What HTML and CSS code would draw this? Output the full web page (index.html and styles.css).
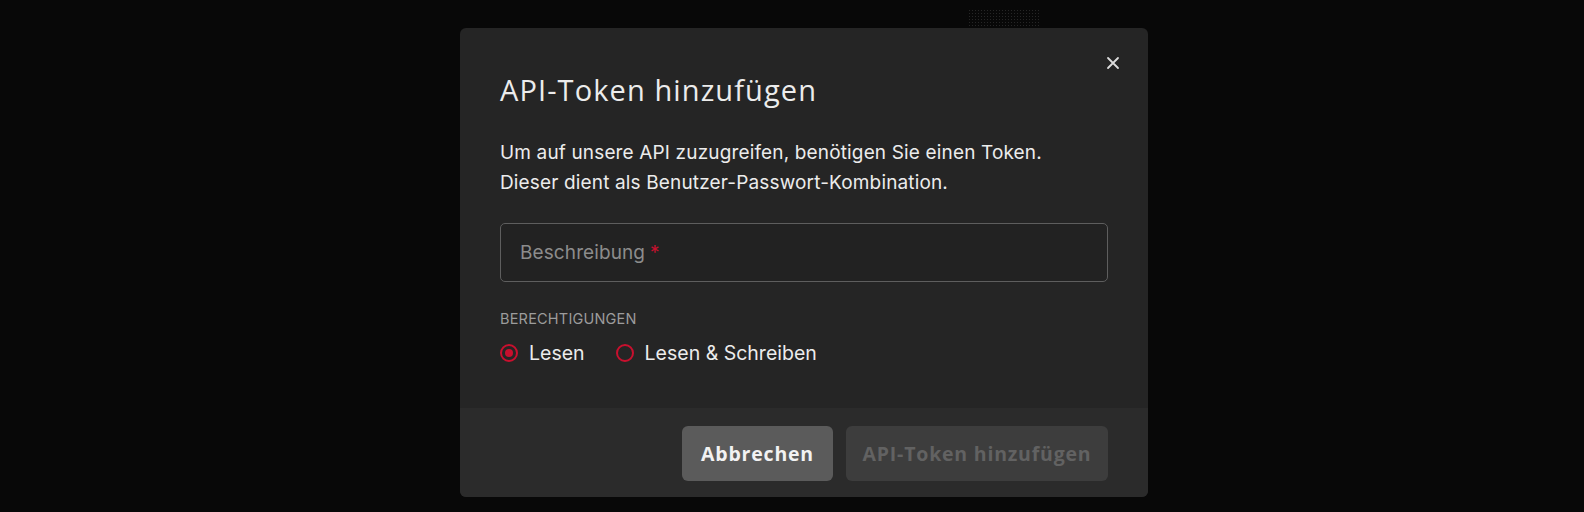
FILE: index.html
```html
<!DOCTYPE html>
<html lang="de">
<head>
<meta charset="utf-8">
<title>API-Token hinzufügen</title>
<link rel="stylesheet" href="styles.css">
</head>
<body>
<div class="backdrop">
  <div class="ghost"></div>
  <div class="modal" role="dialog">
    <button class="close" aria-label="Schließen">
      <svg width="14" height="14" viewBox="0 0 14 14"><path d="M2 2L12 12M12 2L2 12" stroke="#dcdcdc" stroke-width="1.8" stroke-linecap="round"/></svg>
    </button>
    <div class="body">
      <h2 class="title">API-Token hinzufügen</h2>
      <p class="desc">Um auf unsere API zuzugreifen, benötigen Sie einen Token.<br>Dieser dient als Benutzer-Passwort-Kombination.</p>
      <div class="field"><span class="placeholder">Beschreibung</span><span class="req">*</span></div>
      <div class="label">BERECHTIGUNGEN</div>
      <div class="radios">
        <label class="radio"><span class="dot checked"></span>Lesen</label>
        <label class="radio"><span class="dot"></span>Lesen &amp; Schreiben</label>
      </div>
    </div>
    <div class="footer">
      <button class="btn btn-cancel">Abbrechen</button>
      <button class="btn btn-primary">API-Token hinzufügen</button>
    </div>
  </div>
</div>
</body>
</html>
```

FILE: styles.css
```css
* { box-sizing: border-box; }
html, body { margin: 0; padding: 0; }
body { background: #080808; width: 1584px; height: 512px; overflow: hidden; font-family: Inter, "Noto Sans", sans-serif; }
.backdrop { position: relative; height: 512px; display: flex; justify-content: center; padding-top: 28px; padding-left: 24px; }
.ghost { position: absolute; left: 968px; top: 9px; width: 73px; height: 19px;
  background-image: radial-gradient(circle, #262626 0.8px, transparent 1px);
  background-size: 3px 3px; }
.modal { position: relative; width: 688px; height: 469px; background: #252525; border-radius: 6px; display: flex; flex-direction: column; overflow: hidden; }
.close { position: absolute; right: 28px; top: 28px; width: 14px; height: 14px; padding: 0; border: 0; background: none; display: flex; }
.body { padding: 42px 40px 0 40px; flex: 1; }
.title { margin: 0; font-family: "Open Sans", sans-serif; font-weight: 500; font-size: 29px; line-height: 40px; color: #ececec; letter-spacing: 1.1px; }
.desc { margin: 28px 0 0; font-size: 19px; line-height: 30px; color: #ececec; letter-spacing: 0.15px; }
.field { margin-top: 25px; height: 59px; border: 1px solid #5e5e5e; border-radius: 5px; background: #222; display: flex; align-items: center; padding-left: 19px; font-size: 19px; letter-spacing: 0.1px; }
.placeholder { color: #8c8c8c; }
.req { color: #c8102e; margin-left: 5px; }
.label { margin-top: 27px; font-size: 14.5px; line-height: 20px; color: #9c9c9c; letter-spacing: 0.2px; }
.radios { margin-top: 12px; display: flex; gap: 31px; height: 24px; align-items: center; }
.radio { display: flex; align-items: center; gap: 11px; font-size: 19.5px; color: #ececec; }
.dot { width: 18px; height: 18px; border: 2px solid #c8102e; border-radius: 50%; display: flex; align-items: center; justify-content: center; }
.dot.checked::after { content: ""; width: 8px; height: 8px; border-radius: 50%; background: #c8102e; }
.footer { height: 89px; background: #2b2b2b; display: flex; justify-content: flex-end; gap: 13px; padding: 18px 40px 16px; }
.btn { height: 55px; border: 0; border-radius: 6px; font-family: "Open Sans", sans-serif; font-weight: 700; font-size: 19.5px; letter-spacing: 0.8px; padding: 0; }
.btn-cancel { width: 151px; background: #5b5b5b; color: #f2f2f2; }
.btn-primary { width: 262px; background: #3d3d3d; color: #626262; }
```
